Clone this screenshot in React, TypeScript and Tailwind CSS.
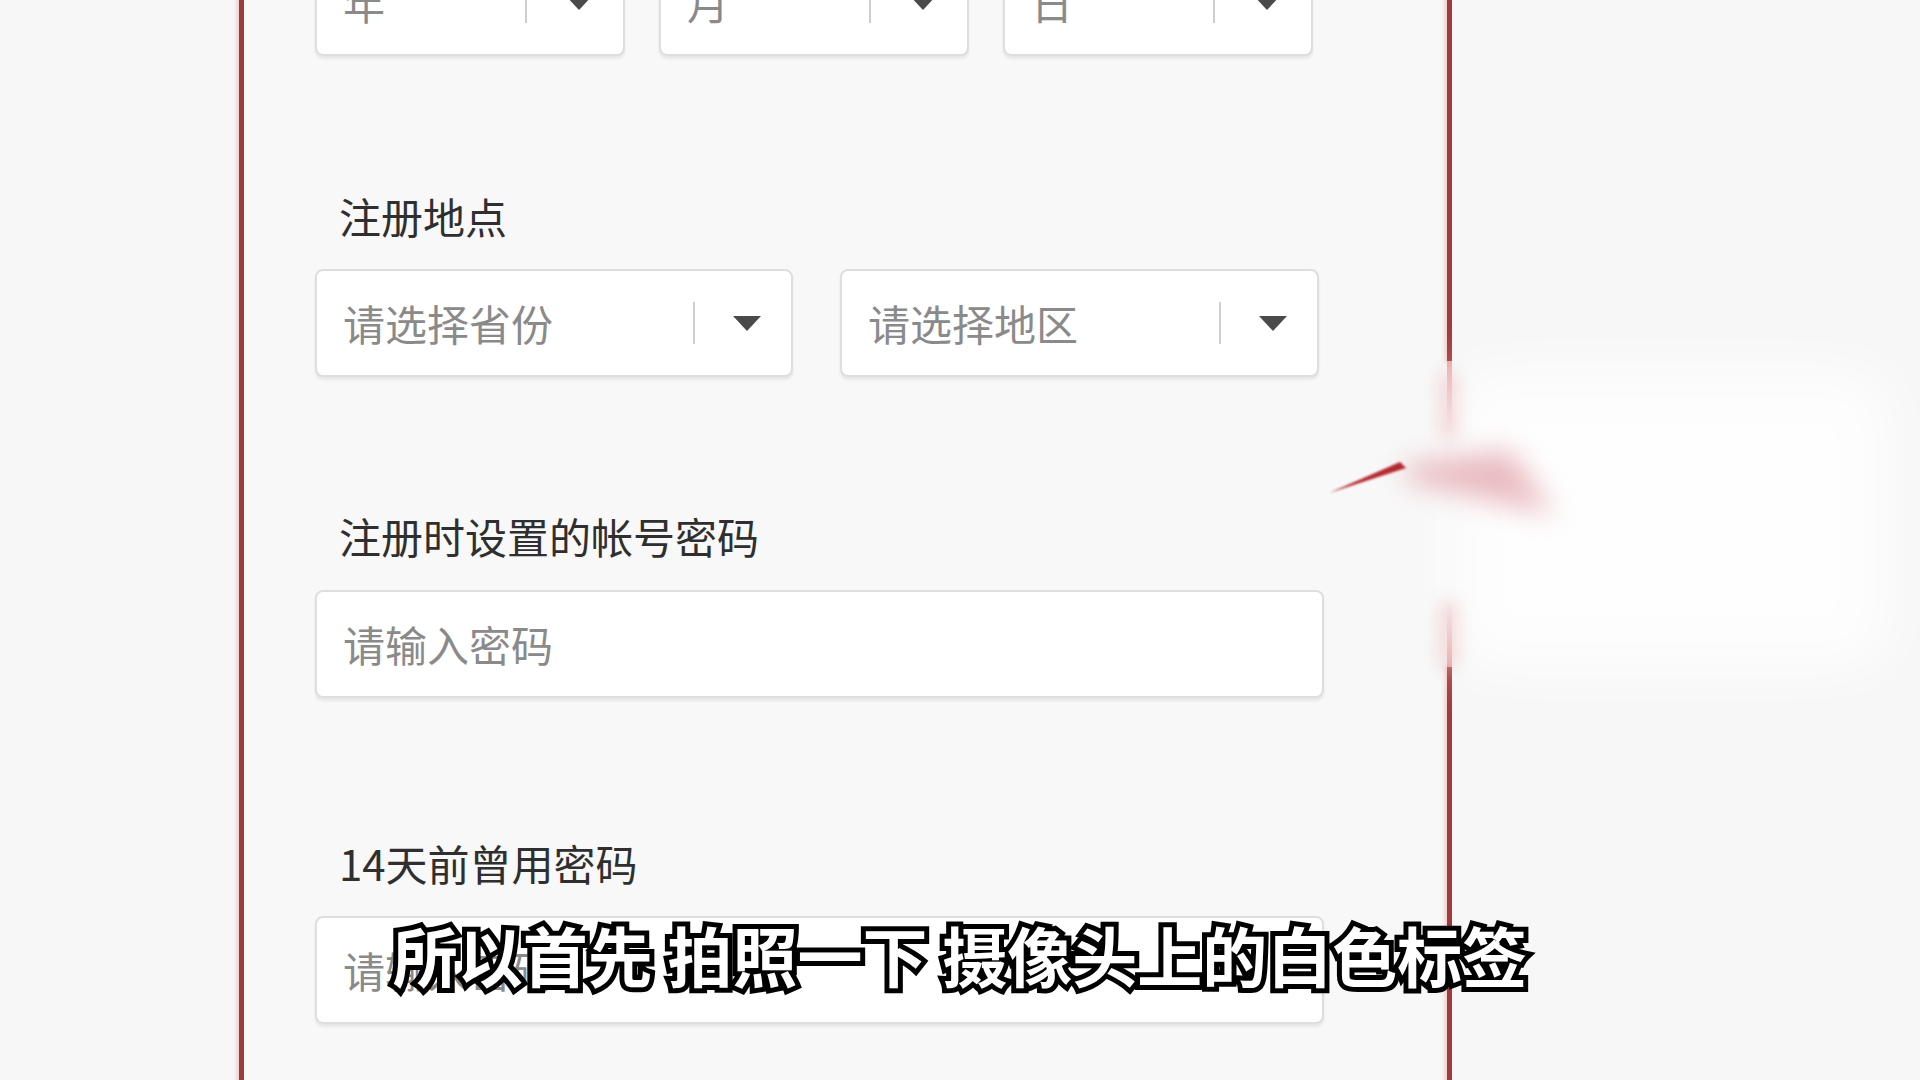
import React from "react";

function Arrow() {
  return (
    <svg width="32" height="20" viewBox="0 0 32 20" className="shrink-0">
      <path d="M2 3 L30 3 L16 18 Z" fill="#4a4a4a" />
    </svg>
  );
}

function Select({ text, w }: { text: string; w: string }) {
  return (
    <div
      className={`${w} h-[108px] shrink-0 bg-white border-2 border-[#dedede] rounded-[8px] shadow-[0_3px_3px_rgba(0,0,0,0.07)] flex items-center pl-[26px] pr-[28px]`}
    >
      <span className="flex-1 text-[42px] leading-none text-[#8a8a8a]">{text}</span>
      <div className="w-[2px] h-[42px] bg-[#cfcfcf] mr-[36px]" />
      <Arrow />
    </div>
  );
}

function Input({ text }: { text: string }) {
  return (
    <div className="w-[1009px] h-[108px] bg-white border-2 border-[#dedede] rounded-[8px] shadow-[0_3px_3px_rgba(0,0,0,0.07)] flex items-center pl-[26px]">
      <span className="text-[42px] leading-none text-[#8a8a8a]">{text}</span>
    </div>
  );
}

function Label({ text }: { text: string }) {
  return (
    <div className="h-[60px] leading-[60px] text-[42px] text-[#2f2f2f] pl-[24px]">{text}</div>
  );
}

export default function App() {
  return (
    <div className="relative w-[1920px] h-[1080px] overflow-hidden bg-[#f7f7f7] flex font-['Noto_Sans_CJK_SC',sans-serif]">
      <div className="w-[239px] shrink-0 bg-[#f7f7f7]" />
      <div className="w-[5px] shrink-0 bg-[#a13a3a] shadow-[0_0_4px_2px_rgba(230,140,140,0.45)]" />
      <div className="w-[1203px] shrink-0 bg-[#f8f8f8] pl-[71px]">
        <div className="mt-[-52px] flex gap-[34px]">
          <Select text="年" w="w-[310px]" />
          <Select text="月" w="w-[310px]" />
          <Select text="日" w="w-[310px]" />
        </div>

        <div className="mt-[130px]">
          <Label text="注册地点" />
          <div className="mt-[23px] flex gap-[47px]">
            <Select text="请选择省份" w="w-[478px]" />
            <Select text="请选择地区" w="w-[479px]" />
          </div>
        </div>

        <div className="mt-[129px]">
          <Label text="注册时设置的帐号密码" />
          <div className="mt-[24px]">
            <Input text="请输入密码" />
          </div>
        </div>

        <div className="mt-[135px]">
          <Label text="14天前曾用密码" />
          <div className="mt-[23px]">
            <Input text="请输入密码" />
          </div>
        </div>
      </div>
      <div className="w-[5px] shrink-0 flex flex-col">
        <div className="h-[361px] bg-[#a13a3a] shadow-[0_0_4px_2px_rgba(230,140,140,0.45)]" />
        <div className="h-[70px] bg-gradient-to-b from-[#e7a5a5] to-transparent" />
        <div className="h-[170px]" />
        <div className="h-[66px] bg-gradient-to-b from-transparent to-[#e2a0a0]" />
        <div className="flex-1 bg-[#a13a3a] shadow-[0_0_4px_2px_rgba(230,140,140,0.45)]" />
      </div>
      <div className="flex-1 bg-[#f7f7f7]" />

      {/* white blurred patch */}
      <div className="absolute left-[1450px] top-[370px] w-[440px] h-[300px] bg-white/80 rounded-[40px] blur-[28px]" />
      {/* pink tapers around the line gap */}
      <div className="absolute left-[1438px] top-[370px] w-[20px] h-[70px] bg-[#eab0b0]/40 rounded-full blur-[8px]" />
      <div className="absolute left-[1438px] top-[600px] w-[20px] h-[70px] bg-[#eab0b0]/40 rounded-full blur-[8px]" />
      {/* red streak */}
      <svg className="absolute left-[1320px] top-[410px]" width="260" height="140" viewBox="0 0 260 140">
        <defs>
          <filter id="bl" x="-50%" y="-50%" width="200%" height="200%">
            <feGaussianBlur stdDeviation="14" />
          </filter>
          <filter id="bl2" x="-50%" y="-50%" width="200%" height="200%">
            <feGaussianBlur stdDeviation="1" />
          </filter>
        </defs>
        <path d="M82 55 L190 40 L235 105 L90 72 Z" fill="#dc8e95" opacity="0.6" filter="url(#bl)" />
        <path d="M9 83 L80 52 L86 58 Z" fill="#b52a30" filter="url(#bl2)" />
      </svg>

      {/* subtitle */}
      <div className="absolute left-0 right-0 top-[914px] h-[80px] flex justify-center items-center">
        <span className="text-[65px] leading-none font-bold text-white [-webkit-text-stroke:10px_#000] [paint-order:stroke_fill] whitespace-pre">
          所以首先 拍照一下 摄像头上的白色标签
        </span>
      </div>
    </div>
  );
}
